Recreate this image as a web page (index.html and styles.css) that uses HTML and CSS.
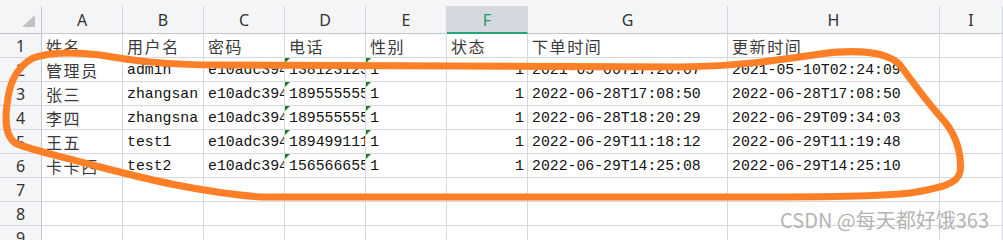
FILE: index.html
```html
<!DOCTYPE html>
<html lang="zh">
<head>
<meta charset="utf-8">
<title>Sheet</title>
<link rel="stylesheet" href="styles.css">
</head>
<body>
<div class="sheet">
  <div class="topstrip"></div>
  <div class="grid">
    <div class="h corner"><span class="tri"></span></div>
    <div class="h">A</div><div class="h">B</div><div class="h">C</div><div class="h">D</div><div class="h">E</div><div class="h sel">F</div><div class="h">G</div><div class="h">H</div><div class="h">I</div>

    <div class="rh">1</div>
    <div class="c cjk">姓名</div><div class="c cjk">用户名</div><div class="c cjk">密码</div><div class="c cjk">电话</div><div class="c cjk">性别</div><div class="c cjk">状态</div><div class="c cjk">下单时间</div><div class="c cjk">更新时间</div><div class="c"></div>

    <div class="rh">2</div>
    <div class="c cjk">管理员</div><div class="c">admin</div><div class="c">e10adc3949ba59abbe56e057f20f883e</div><div class="c flag">13812312345</div><div class="c flag">1</div><div class="c num">1</div><div class="c">2021-05-06T17:20:07</div><div class="c">2021-05-10T02:24:09</div><div class="c"></div>

    <div class="rh">3</div>
    <div class="c cjk">张三</div><div class="c">zhangsan</div><div class="c">e10adc3949ba59abbe56e057f20f883e</div><div class="c flag">18955555555</div><div class="c flag">1</div><div class="c num">1</div><div class="c">2022-06-28T17:08:50</div><div class="c">2022-06-28T17:08:50</div><div class="c"></div>

    <div class="rh">4</div>
    <div class="c cjk">李四</div><div class="c">zhangsna</div><div class="c">e10adc3949ba59abbe56e057f20f883e</div><div class="c flag">18955555555</div><div class="c flag">1</div><div class="c num">1</div><div class="c">2022-06-28T18:20:29</div><div class="c">2022-06-29T09:34:03</div><div class="c"></div>

    <div class="rh">5</div>
    <div class="c cjk">王五</div><div class="c">test1</div><div class="c">e10adc3949ba59abbe56e057f20f883e</div><div class="c flag">18949911111</div><div class="c flag">1</div><div class="c num">1</div><div class="c">2022-06-29T11:18:12</div><div class="c">2022-06-29T11:19:48</div><div class="c"></div>

    <div class="rh">6</div>
    <div class="c cjk">卡卡西</div><div class="c">test2</div><div class="c">e10adc3949ba59abbe56e057f20f883e</div><div class="c flag">15656665555</div><div class="c flag">1</div><div class="c num">1</div><div class="c">2022-06-29T14:25:08</div><div class="c">2022-06-29T14:25:10</div><div class="c"></div>

    <div class="rh">7</div>
    <div class="c"></div><div class="c"></div><div class="c"></div><div class="c"></div><div class="c"></div><div class="c"></div><div class="c"></div><div class="c"></div><div class="c"></div>

    <div class="rh">8</div>
    <div class="c"></div><div class="c"></div><div class="c"></div><div class="c"></div><div class="c"></div><div class="c"></div><div class="c"></div><div class="c"></div><div class="c"></div>

    <div class="rh">9</div>
    <div class="c"></div><div class="c"></div><div class="c"></div><div class="c"></div><div class="c"></div><div class="c"></div><div class="c"></div><div class="c"></div><div class="c"></div>
  </div>

  <svg class="annot" viewBox="0 0 1003 240" width="1003" height="240" aria-hidden="true">
    <path d="M 100,55 C 130,60 160,65 220,65 L 680,67 C 740,66 780,60 820,54 C 850,50 885,50 900,65 C 915,85 925,100 945,122 C 958,138 962,158 960,172 C 958,184 940,188 910,193 C 870,197 820,197 700,197 L 260,197 C 200,192 150,180 100,167 C 60,156 30,150 15,143 C 5,135 5,120 7,105 C 9,85 15,68 33,58 C 50,52 75,52 100,55 Z" />
  </svg>

  <div class="watermark">CSDN @每天都好饿363</div>
</div>
</body>
</html>
```

FILE: styles.css
```css
* { box-sizing: border-box; }

html, body {
  margin: 0;
  padding: 0;
  background: #ffffff;
}

.sheet {
  position: relative;
  width: 1003px;
  height: 240px;
  overflow: hidden;
  background: #ffffff;
}

.topstrip {
  height: 6px;
  background: #f4f5f7;
}

.grid {
  display: grid;
  grid-template-columns: 42px 81px 81px 81px 81px 81px 81px 200px 212px 1fr;
  grid-template-rows: 28px repeat(9, 24px);
}

.h {
  background: #f4f5f7;
  border-right: 1px solid #d3d6de;
  border-bottom: 1px solid #c3c7cf;
  font-family: "Noto Sans", "Open Sans", sans-serif;
  font-size: 16px;
  color: #333333;
  display: flex;
  align-items: center;
  justify-content: center;
  padding-top: 1px;
}

.h.sel {
  background: #d5d8df;
  border-bottom: 2px solid #22a875;
  color: #1c9a69;
}

.corner {
  justify-content: flex-end;
  align-items: flex-end;
  padding: 0 6px 6px 0;
  border-right: 1px solid #c3c7cf;
}

.tri {
  width: 13px;
  height: 12px;
  background: #c2c2c2;
  clip-path: polygon(100% 0, 100% 100%, 0 100%);
}

.rh {
  background: #f4f5f7;
  border-right: 1px solid #c3c7cf;
  border-bottom: 1px solid #d3d6de;
  font-family: "Noto Sans", "Open Sans", sans-serif;
  font-size: 16px;
  color: #333333;
  display: flex;
  align-items: center;
  justify-content: center;
  padding-top: 1px;
}

.c {
  position: relative;
  border-right: 1px solid #d5d8e0;
  border-bottom: 1px solid #d5d8e0;
  overflow: hidden;
  white-space: nowrap;
  padding: 2px 3px 0 4px;
  font-family: "Liberation Mono", "DejaVu Sans Mono", monospace;
  font-size: 14.8px;
  line-height: 21px;
  color: #111111;
}

.c.cjk {
  font-family: "Noto Sans CJK SC", "Noto Sans", sans-serif;
  font-size: 16px;
  letter-spacing: 1.6px;
  color: #3a3a3a;
  padding-top: 1px;
  line-height: 22px;
}

.c.num {
  text-align: right;
}

.c.flag::before {
  content: "";
  position: absolute;
  left: 0;
  top: 0;
  width: 5px;
  height: 5px;
  background: #1c7d22;
  clip-path: polygon(0 0, 100% 0, 0 100%);
}

.annot {
  position: absolute;
  left: 0;
  top: 0;
  pointer-events: none;
}

.annot path {
  fill: none;
  stroke: #fe7f26;
  stroke-width: 7;
  stroke-linecap: round;
  stroke-linejoin: round;
}

.watermark {
  position: absolute;
  left: 780px;
  top: 206px;
  font-family: "Noto Sans CJK SC", "Noto Sans", sans-serif;
  font-size: 20px;
  line-height: 28px;
  color: rgba(160, 160, 160, 0.8);
  text-shadow: 0 0 1px rgba(255, 255, 255, 0.9);
  white-space: nowrap;
}
```
